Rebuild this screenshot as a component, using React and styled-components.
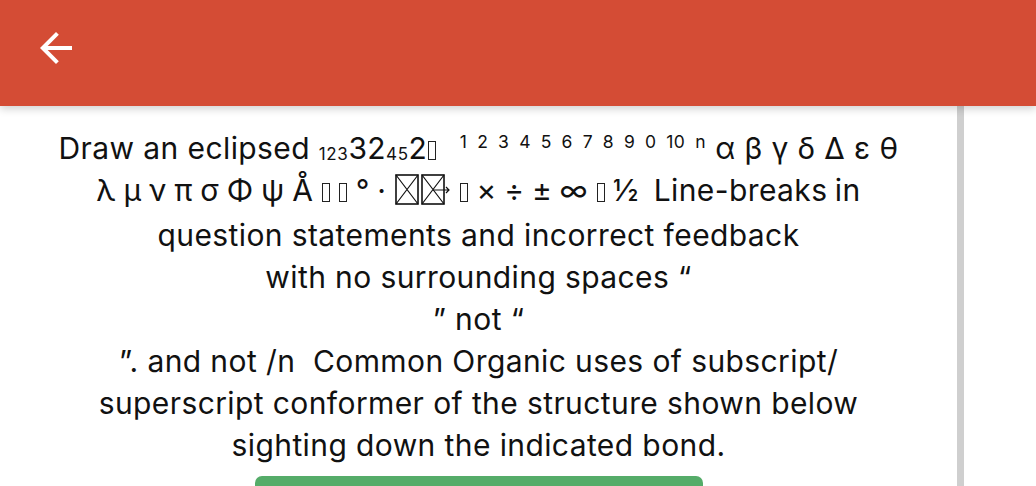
import React from "react"
import styled, { createGlobalStyle } from "styled-components"

const GlobalStyle = createGlobalStyle`
  html, body {
    margin: 0;
    padding: 0;
    background: #ffffff;
  }
  body {
    font-family: Inter, Roboto, sans-serif;
    overflow: hidden;
  }
`

const Page = styled.div`
  width: 1036px;
  height: 486px;
  display: flex;
  flex-direction: column;
  overflow: hidden;
`

const Header = styled.header`
  height: 106px;
  flex-shrink: 0;
  background: #d44c35;
  display: flex;
  align-items: center;
  padding-left: 32px;
  box-shadow: 0 3px 8px rgba(0, 0, 0, 0.18);
  position: relative;
  z-index: 2;
`

const BackButton = styled.button`
  width: 48px;
  height: 48px;
  margin-top: -10px;
  padding: 0;
  border: none;
  background: none;
  display: flex;
  align-items: center;
  justify-content: center;
  cursor: pointer;
`

const Body = styled.div`
  flex: 1;
  display: flex;
  min-height: 0;
`

const Content = styled.main`
  width: 957px;
  display: flex;
  flex-direction: column;
  align-items: center;
  padding-top: 21px;
`

const Scrollbar = styled.div`
  width: 7px;
  background: #cfcfcf;
`

const Question = styled.div`
  display: flex;
  flex-direction: column;
  align-items: center;
  font-size: 30px;
  letter-spacing: 0.4px;
  color: #111111;
  white-space: nowrap;
`

const Line = styled.p`
  margin: 0;
  height: ${(p) => (p.$tall ? 45 : 42)}px;
  line-height: 42px;
  text-align: center;
  word-spacing: ${(p) => p.$tight || 0}px;
`

const Sub = styled.span`
  font-size: 17px;
  line-height: 0;
  letter-spacing: 0.6px;
  vertical-align: -1px;
`

const Sups = styled.span`
  margin-left: 22px;
`

const Sup = styled.span`
  font-size: 17.5px;
  line-height: 0;
  margin: 0 0.5px;
  vertical-align: 11px;
`

const Tofu = styled.span`
  display: inline-block;
  width: 8px;
  height: 19px;
  border: 1px solid #222;
  box-sizing: border-box;
  margin: 0 1px;
  vertical-align: -1px;
`

const Missing = styled.svg`
  vertical-align: -4px;
  margin: 0 1px;
`

const SubmitButton = styled.button`
  margin-top: 10px;
  width: 448px;
  height: 48px;
  flex-shrink: 0;
  border: none;
  border-radius: 7px;
  background: #55ac69;
`

const BoxX = ({ arrow }) => (
  <Missing width={arrow ? 30 : 24} height="31" viewBox={arrow ? "0 0 30 31" : "0 0 24 31"}>
    <rect x="1" y="1" width="22" height="29" fill="none" stroke="#111" strokeWidth="1.6" />
    <path d="M1 1 L23 30 M23 1 L1 30" stroke="#111" strokeWidth="1.2" fill="none" />
    {arrow && (
      <path d="M12 16 H28 M25 13 L28 16 L25 19" stroke="#111" strokeWidth="1.2" fill="none" />
    )}
  </Missing>
)

const superDigits = ["1", "2", "3", "4", "5", "6", "7", "8", "9", "0", "10", "n"]

const App = () => {
  return (
    <Page>
      <GlobalStyle />
      <Header>
        <BackButton aria-label="Back">
          <svg width="48" height="48" viewBox="0 0 24 24">
            <path
              d="M20 11H7.83l5.59-5.59L12 4l-8 8 8 8 1.41-1.41L7.83 13H20v-2z"
              fill="#ffffff"
            />
          </svg>
        </BackButton>
      </Header>
      <Body>
        <Content>
          <Question>
            <Line>
              Draw an eclipsed <Sub>123</Sub>32<Sub>45</Sub>2<Tofu />
              <Sups>
                {superDigits.map((d, i) => (
                  <React.Fragment key={i}>
                    <Sup>{d}</Sup>{" "}
                  </React.Fragment>
                ))}
              </Sups>
              α β γ δ Δ ε θ
            </Line>
            <Line $tall $tight={-1.4}>
              λ μ ν π σ Φ ψ Å <Tofu /> <Tofu /> ° · <BoxX />
              <BoxX arrow /> <Tofu /> × ÷ ± ∞ <Tofu /> ½&nbsp; Line-breaks in
            </Line>
            <Line>question statements and incorrect feedback</Line>
            <Line>with no surrounding spaces “</Line>
            <Line>” not “</Line>
            <Line>”. and not /n&nbsp; Common Organic uses of subscript/</Line>
            <Line>superscript conformer of the structure shown below</Line>
            <Line>sighting down the indicated bond.</Line>
          </Question>
          <SubmitButton />
        </Content>
        <Scrollbar />
      </Body>
    </Page>
  )
}

export default App
